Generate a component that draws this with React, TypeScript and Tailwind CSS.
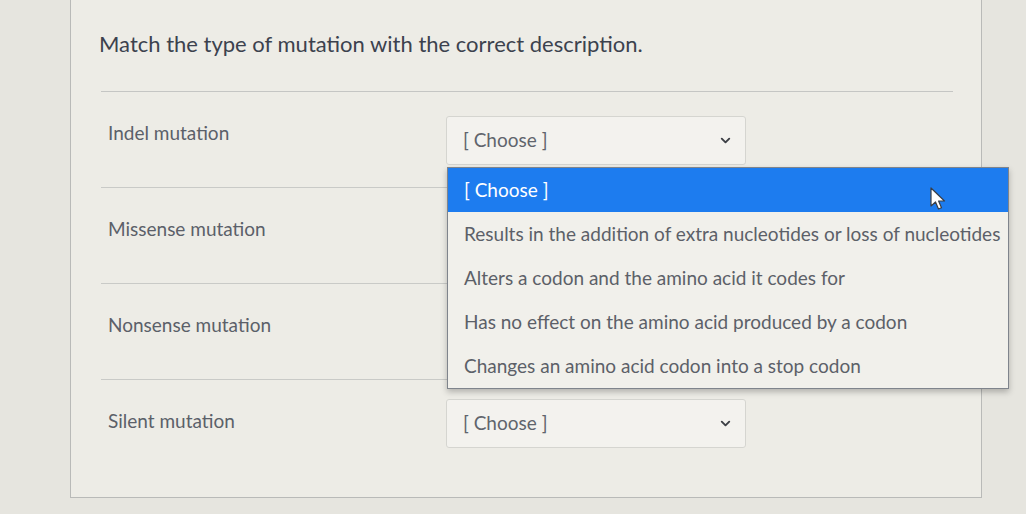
import { ChevronDown } from "lucide-react";

const rows = ["Indel mutation", "Missense mutation", "Nonsense mutation", "Silent mutation"];

const options = [
	"[ Choose ]",
	"Results in the addition of extra nucleotides or loss of nucleotides",
	"Alters a codon and the amino acid it codes for",
	"Has no effect on the amino acid produced by a codon",
	"Changes an amino acid codon into a stop codon",
];

function Select({ hidden }: { hidden?: boolean }) {
	return (
		<div
			className={`flex h-[49px] w-[300px] items-center justify-between rounded-[3px] border border-[#d5d5d0] bg-[#f3f2ee] pl-[16px] pr-[12px] text-[19px] text-[#60646c] ${hidden ? "invisible" : ""}`}
		>
			<span>[ Choose ]</span>
			<ChevronDown className="h-[15px] w-[15px] text-[#3c3f45]" strokeWidth={3} />
		</div>
	);
}

export default function App() {
	return (
		<div
			className="h-[514px] w-[1026px] overflow-hidden bg-[#e6e5df] pl-[70px]"
			style={{ fontFamily: "Lato, 'Open Sans', sans-serif" }}
		>
			<div className="relative flex h-[498px] w-[912px] flex-col border-x border-b border-[#b9bab8] bg-[#edece6]">
				{/* header */}
				<div className="pl-[28px] pt-[30px] text-[22px] leading-[28px] text-[#3c424e]">
					Match the type of mutation with the correct description.
				</div>
				<div className="ml-[30px] mr-[28px] mt-[33px] border-t border-[#c5c6c4]" />

				{/* rows */}
				{rows.map((label, i) => (
					<div key={label}>
						<div className="flex h-[95px] items-start pl-[37px]">
							<div className="w-[338px] pt-[29px] text-[19px] leading-[24px] text-[#5b6069]">{label}</div>
							<div className={i === 3 ? "pt-[19px]" : "pt-[24px]"}>
								<Select hidden={i === 1 || i === 2} />
							</div>
						</div>
						{i < 3 && <div className="ml-[30px] mr-[28px] border-t border-[#c9cac7]" />}
					</div>
				))}

				{/* open dropdown */}
				<div className="absolute left-[376px] top-[167px] w-[562px] border border-[#7f848c] bg-[#f1f0eb] shadow-[0_3px_6px_rgba(0,0,0,0.25)]">
					{options.map((opt, i) => (
						<div
							key={opt}
							className={
								i === 0
									? "relative flex h-[44px] items-center bg-[#1d7cef] pl-[16px] text-[19px] text-white"
									: "flex h-[44px] items-center whitespace-nowrap pl-[16px] text-[19px] text-[#5c6068]"
							}
						>
							{opt}
							{i === 0 && (
								<svg
									className="absolute left-[481px] top-[19px]"
									width="18"
									height="24"
									viewBox="0 0 18 24"
								>
									<path
										d="M2 1 L2 19 L6.5 15 L9.5 22 L12.5 20.8 L9.6 14 L15.5 14 Z"
										fill="white"
										stroke="#3a3f47"
										strokeWidth="1.2"
										strokeLinejoin="round"
									/>
								</svg>
							)}
						</div>
					))}
				</div>
			</div>
		</div>
	);
}
